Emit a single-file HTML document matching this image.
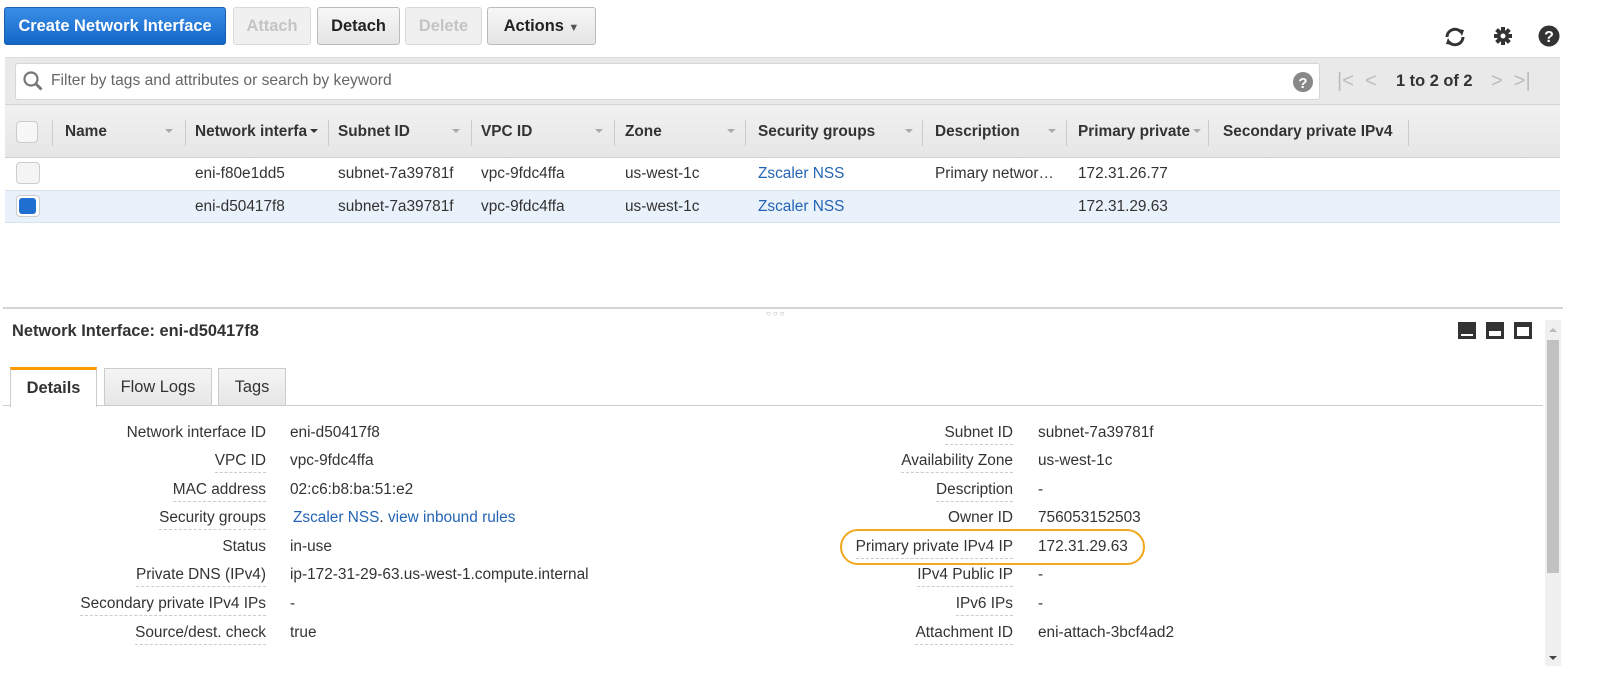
<!DOCTYPE html>
<html><head><style>
*{box-sizing:border-box;margin:0;padding:0}
body{width:1600px;height:677px;overflow:hidden;background:#fff;font-family:"Liberation Sans",Arial,sans-serif;font-size:15.4px;color:#333;position:relative}
.a{position:absolute;white-space:nowrap}
.btn{position:absolute;top:7px;height:38px;border:1px solid #bbb;border-radius:3px;background:linear-gradient(#f7f7f7,#e4e4e4);font-weight:bold;font-size:16.4px;line-height:36px;text-align:center;color:#222}
.dis{color:#c4c4c4;border-color:#d8d8d8;background:#f0f0f0}
.hd{font-weight:bold;font-size:15.4px;color:#333;top:123px}
.sep{position:absolute;top:120px;width:1px;height:26px;background:#ccc}
.caret{position:absolute;top:129px;width:0;height:0;border-left:4px solid transparent;border-right:4px solid transparent;border-top:4px solid #aaa}
.lbl{position:absolute;text-align:right;white-space:nowrap;border-bottom:1px dashed #ccc;padding-bottom:2px}
.val{position:absolute;white-space:nowrap}
.link{color:#2464b4}
</style></head><body>
<div class="btn" style="left:4px;width:222px;background:linear-gradient(#3a8ee6,#1466c6);border-color:#1a5fb0;color:#fff">Create Network Interface</div>
<div class="btn dis" style="left:233px;width:78px">Attach</div>
<div class="btn" style="left:317px;width:83px">Detach</div>
<div class="btn dis" style="left:405px;width:77px">Delete</div>
<div class="btn" style="left:487px;width:109px">Actions <span style="font-size:11px;color:#555">&#9660;</span></div>
<svg class="a" style="left:1442px;top:26px" width="26" height="22" viewBox="0 0 26 22"><path d="M5 11a8 8 0 0 1 14-5" stroke="#333" stroke-width="3" fill="none"/><path d="M16 3l6 1-2 6z" fill="#333"/><path d="M21 11a8 8 0 0 1-14 5" stroke="#333" stroke-width="3" fill="none"/><path d="M10 19l-6-1 2-6z" fill="#333"/></svg>
<svg class="a" style="left:1493px;top:26px" width="20" height="20" viewBox="0 0 20 20"><circle cx="10" cy="10" r="6" fill="#333"/><g stroke="#333" stroke-width="4"><path d="M10 1v18M1 10h18M3.6 3.6l12.8 12.8M16.4 3.6L3.6 16.4"/></g><circle cx="10" cy="10" r="2.5" fill="#fff"/></svg>
<svg class="a" style="left:1538px;top:25px" width="22" height="22" viewBox="0 0 22 22"><circle cx="11" cy="11" r="10.5" fill="#333"/><text x="11" y="17" text-anchor="middle" font-family="Liberation Sans" font-weight="bold" font-size="16" fill="#fff">?</text></svg>
<div class="a" style="left:5px;top:57px;width:1555px;height:47px;background:#e9e9e9;border-top:1px solid #ddd"></div>
<div class="a" style="left:15px;top:63px;width:1305px;height:37px;background:#fff;border:1px solid #d6d6d6;border-radius:3px"></div>
<svg class="a" style="left:22px;top:70px" width="22" height="22" viewBox="0 0 22 22"><circle cx="9" cy="9" r="6.5" stroke="#777" stroke-width="2.2" fill="none"/><path d="M13.5 13.5l6 6" stroke="#777" stroke-width="3"/></svg>
<div class="a" style="left:51px;top:72px;color:#666;font-size:15.6px">Filter by tags and attributes or search by keyword</div>
<svg class="a" style="left:1292px;top:71px" width="22" height="22" viewBox="0 0 22 22"><circle cx="11" cy="11" r="10" fill="#888"/><text x="11" y="17" text-anchor="middle" font-family="Liberation Sans" font-weight="bold" font-size="15" fill="#fff">?</text></svg>
<div class="a" style="left:1337px;top:70px;color:#bbb;font-size:20px">|&lt;&nbsp;&nbsp;&lt;</div>
<div class="a" style="left:1396px;top:72px;font-weight:bold;font-size:16.4px;color:#333">1 to 2 of 2</div>
<div class="a" style="left:1491px;top:70px;color:#bbb;font-size:20px">&gt;&nbsp;&nbsp;&gt;|</div>
<div class="a" style="left:5px;top:104px;width:1555px;height:54px;background:linear-gradient(#f1f1f1,#e6e6e6);border-top:1px solid #d4d4d4;border-bottom:1px solid #cfcfcf"></div>
<div class="a" style="left:16px;top:121px;width:22px;height:22px;border:1px solid #ccc;border-radius:4px;background:#f7f7f7"></div>
<div class="sep" style="left:52px"></div><div class="sep" style="left:185px"></div><div class="sep" style="left:328px"></div><div class="sep" style="left:471px"></div><div class="sep" style="left:614px"></div><div class="sep" style="left:745px"></div><div class="sep" style="left:922px"></div><div class="sep" style="left:1066px"></div><div class="sep" style="left:1208px"></div><div class="sep" style="left:1408px"></div>
<div class="a hd" style="left:65px">Name</div><div class="caret" style="left:165px"></div>
<div class="a hd" style="left:195px;width:112px;overflow:hidden">Network interfa</div><div class="caret" style="left:310px;border-top-color:#333"></div>
<div class="a hd" style="left:338px">Subnet ID</div><div class="caret" style="left:452px"></div>
<div class="a hd" style="left:481px">VPC ID</div><div class="caret" style="left:595px"></div>
<div class="a hd" style="left:625px">Zone</div><div class="caret" style="left:727px"></div>
<div class="a hd" style="left:758px">Security groups</div><div class="caret" style="left:905px"></div>
<div class="a hd" style="left:935px">Description</div><div class="caret" style="left:1048px"></div>
<div class="a hd" style="left:1078px;width:113px;overflow:hidden">Primary private</div><div class="caret" style="left:1193px"></div>
<div class="a hd" style="left:1223px">Secondary private IPv4</div>
<div class="a" style="left:5px;top:190px;width:1555px;height:33px;background:#e9f1fb;border-top:1px solid #d8e2ee;border-bottom:1px solid #d8e2ee"></div>
<div class="a" style="left:16px;top:162px;width:24px;height:22px;border:1px solid #ccc;border-radius:4px;background:#f4f4f4"></div>
<div class="a" style="left:16px;top:195px;width:24px;height:22px;border:1px solid #ccc;border-radius:4px;background:#fff"></div>
<div class="a" style="left:19px;top:198px;width:17px;height:16px;border-radius:3px;background:#1f6fd0"></div>
<div class="a" style="left:195px;top:165px">eni-f80e1dd5</div><div class="a" style="left:338px;top:165px">subnet-7a39781f</div><div class="a" style="left:481px;top:165px">vpc-9fdc4ffa</div><div class="a" style="left:625px;top:165px">us-west-1c</div><div class="a link" style="left:758px;top:165px">Zscaler NSS</div><div class="a" style="left:935px;top:165px">Primary networ…</div><div class="a" style="left:1078px;top:165px">172.31.26.77</div>
<div class="a" style="left:195px;top:198px">eni-d50417f8</div><div class="a" style="left:338px;top:198px">subnet-7a39781f</div><div class="a" style="left:481px;top:198px">vpc-9fdc4ffa</div><div class="a" style="left:625px;top:198px">us-west-1c</div><div class="a link" style="left:758px;top:198px">Zscaler NSS</div><div class="a" style="left:1078px;top:198px">172.31.29.63</div>
<div class="a" style="left:3px;top:307px;width:1560px;height:2px;background:#d4d4d4"></div>
<div class="a" style="left:766px;top:309px;font-size:8px;color:#aaa;letter-spacing:2px">○○○</div>
<div class="a" style="left:12px;top:322px;font-weight:bold;font-size:16.4px">Network Interface: eni-d50417f8</div>
<div class="a" style="left:1458px;top:322px;width:18px;height:17px;background:#333"><div style="position:absolute;left:3px;right:3px;bottom:3px;height:2px;background:#fff"></div></div>
<div class="a" style="left:1486px;top:322px;width:18px;height:17px;background:#333"><div style="position:absolute;left:3px;right:3px;bottom:3px;height:5px;background:#fff"></div></div>
<div class="a" style="left:1514px;top:322px;width:18px;height:17px;background:#333"><div style="position:absolute;left:3px;right:3px;bottom:3px;height:9px;background:#fff"></div></div>
<div class="a" style="left:1545px;top:320px;width:16px;height:346px;background:#f0f0f0"></div>
<div class="a" style="left:1547px;top:340px;width:12px;height:233px;background:#c1c1c1"></div>
<div class="a" style="left:1549px;top:328px;border-left:4px solid transparent;border-right:4px solid transparent;border-bottom:4px solid #bbb"></div>
<div class="a" style="left:1549px;top:656px;border-left:4px solid transparent;border-right:4px solid transparent;border-top:4px solid #444"></div>
<div class="a" style="left:3px;top:405px;width:1540px;height:1px;background:#ccc"></div>
<div class="a" style="left:10px;top:367px;width:87px;height:40px;background:#fff;border:1px solid #ccc;border-top:3px solid #f90;border-bottom:none;font-weight:bold;font-size:16.4px;text-align:center;line-height:36px;color:#333">Details</div>
<div class="a" style="left:104px;top:368px;height:37px;background:linear-gradient(#f5f5f5,#e6e6e6);border:1px solid #ccc;border-bottom:none;font-size:16.4px;text-align:center;line-height:36px;width:108px">Flow Logs</div>
<div class="a" style="left:218px;top:368px;width:68px;height:37px;background:linear-gradient(#f5f5f5,#e6e6e6);border:1px solid #ccc;border-bottom:none;font-size:16.4px;text-align:center;line-height:36px">Tags</div>
<div class="lbl" style="right:1334px;top:424px;border:none">Network interface ID</div><div class="val" style="left:290px;top:424px">eni-d50417f8</div>
<div class="lbl" style="right:1334px;top:452px">VPC ID</div><div class="val" style="left:290px;top:452px">vpc-9fdc4ffa</div>
<div class="lbl" style="right:1334px;top:481px">MAC address</div><div class="val" style="left:290px;top:481px">02:c6:b8:ba:51:e2</div>
<div class="lbl" style="right:1334px;top:509px">Security groups</div><div class="val link" style="left:293px;top:509px">Zscaler NSS<span style="color:#333">. </span> view inbound rules</div>
<div class="lbl" style="right:1334px;top:538px;border:none">Status</div><div class="val" style="left:290px;top:538px">in-use</div>
<div class="lbl" style="right:1334px;top:566px">Private DNS (IPv4)</div><div class="val" style="left:290px;top:566px">ip-172-31-29-63.us-west-1.compute.internal</div>
<div class="lbl" style="right:1334px;top:595px">Secondary private IPv4 IPs</div><div class="val" style="left:290px;top:595px">-</div>
<div class="lbl" style="right:1334px;top:624px">Source/dest. check</div><div class="val" style="left:290px;top:624px">true</div>
<div class="lbl" style="right:587px;top:424px">Subnet ID</div><div class="val" style="left:1038px;top:424px">subnet-7a39781f</div>
<div class="lbl" style="right:587px;top:452px">Availability Zone</div><div class="val" style="left:1038px;top:452px">us-west-1c</div>
<div class="lbl" style="right:587px;top:481px">Description</div><div class="val" style="left:1038px;top:481px">-</div>
<div class="lbl" style="right:587px;top:509px">Owner ID</div><div class="val" style="left:1038px;top:509px">756053152503</div>
<div class="lbl" style="right:587px;top:538px">Primary private IPv4 IP</div><div class="val" style="left:1038px;top:538px">172.31.29.63</div>
<div class="lbl" style="right:587px;top:566px">IPv4 Public IP</div><div class="val" style="left:1038px;top:566px">-</div>
<div class="lbl" style="right:587px;top:595px">IPv6 IPs</div><div class="val" style="left:1038px;top:595px">-</div>
<div class="lbl" style="right:587px;top:624px">Attachment ID</div><div class="val" style="left:1038px;top:624px">eni-attach-3bcf4ad2</div>
<div class="a" style="left:840px;top:529px;width:305px;height:36px;border:2px solid #f0a81c;border-radius:18px"></div>
</body></html>
